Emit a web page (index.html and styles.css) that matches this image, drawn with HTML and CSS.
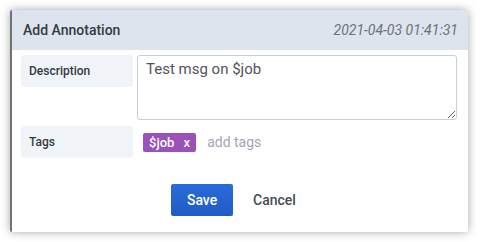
FILE: index.html
```html
<!DOCTYPE html>
<html lang="en">
<head>
    <meta charset="UTF-8">
    <meta name="viewport" content="width=device-width, initial-scale=1.0">
    <title>Add Annotation</title>
    <link rel="stylesheet" href="styles.css">
</head>
<body>
    <div class="dialog">
        <div class="dialog-header">
            <span class="dialog-title">Add Annotation</span>
            <span class="dialog-time">2021-04-03 01:41:31</span>
        </div>
        <div class="dialog-body">
            <div class="field">
                <div class="field-label">Description</div>
                <div class="field-input">
                    <textarea class="textarea">Test msg on $job</textarea>
                </div>
            </div>
            <div class="field">
                <div class="field-label">Tags</div>
                <div class="field-input tags">
                    <span class="tag">$job <span class="tag-x">x</span></span>
                    <span class="tags-placeholder">add tags</span>
                </div>
            </div>
            <div class="actions">
                <button class="btn btn-primary">Save</button>
                <button class="btn btn-link">Cancel</button>
            </div>
        </div>
    </div>
</body>
</html>
```

FILE: styles.css
```css
body {
    margin: 0;
    padding: 10px;
    background-color: #ffffff;
    font-family: Roboto, "Liberation Sans", sans-serif;
    color: #333;
}
.dialog {
    width: 458px;
    height: 222px;
    box-sizing: border-box;
    background-color: #fff;
    border-left: 2px solid #707278;
    border-radius: 2px;
    box-shadow: 0 0 10px rgba(0, 0, 0, 0.35);
    display: flex;
    flex-direction: column;
}
.dialog-header {
    height: 40px;
    display: flex;
    align-items: center;
    justify-content: space-between;
    padding: 0 10px 0 11px;
    background-color: #dde4ed;
}
.dialog-title {
    font-size: 14px;
    font-weight: 500;
    color: #343b40;
}
.dialog-time {
    font-size: 14px;
    font-style: italic;
    color: #6e7176;
}
.dialog-body {
    padding: 5px 11px 0 9px;
}
.field {
    display: flex;
    gap: 4px;
    margin-bottom: 6px;
}
.field-label {
    width: 100px;
    height: 32px;
    padding: 0 4px 0 8px;
    background-color: #f0f3f8;
    border-radius: 3px;
    font-size: 12px;
    font-weight: 500;
    line-height: 32px;
    color: #343b40;
}
.field-input {
    flex: 1;
}
.textarea {
    display: block;
    width: 100%;
    height: 65px;
    box-sizing: border-box;
    padding: 4px 8px;
    border: 1px solid #c7d0d9;
    border-radius: 3px;
    font-family: Roboto, "Liberation Sans", sans-serif;
    font-size: 15px;
    color: #52545c;
    resize: vertical;
}
.tags {
    display: flex;
    align-items: center;
    height: 32px;
    padding-left: 6px;
}
.tag {
    display: inline-block;
    background-color: #9b50ba;
    color: #fff;
    font-size: 13px;
    font-weight: 500;
    line-height: 19px;
    height: 19px;
    padding: 0 6px 0 6px;
    border-radius: 2px;
    margin-right: 11px;
}
.tag-x {
    margin-left: 6px;
}
.tags-placeholder {
    font-size: 14px;
    color: #9fa7b3;
}
.actions {
    display: flex;
    justify-content: center;
    gap: 7px;
    margin-top: 26px;
    padding-left: 2px;
}
.btn {
    height: 32px;
    padding: 0 13px;
    border: none;
    border-radius: 2px;
    font-family: Roboto, "Liberation Sans", sans-serif;
    font-size: 14px;
    font-weight: 500;
    cursor: pointer;
}
.btn-primary {
    width: 62px;
    color: #fff;
    background: linear-gradient(#2b6ad8, #1f5cc6);
}
.btn-link {
    background: none;
    color: #464c54;
}
```
